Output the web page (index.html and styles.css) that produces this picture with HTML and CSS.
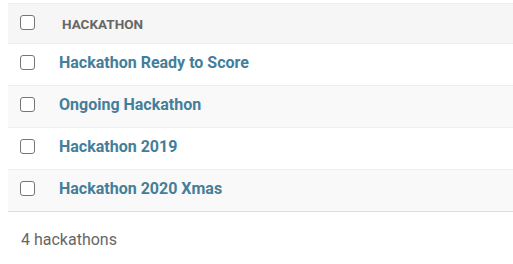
FILE: index.html
```html
<!DOCTYPE html>
<html>

<head>
    <title>Hackathons</title>
    <link rel="stylesheet" href="styles.css">
</head>

<body>
    <div id="changelist">
        <table class="result-list">
            <thead>
                <tr>
                    <th class="action-col"><input type="checkbox" class="select-box"></th>
                    <th class="name-col">Hackathon</th>
                </tr>
            </thead>
            <tbody>
                <tr>
                    <td class="action-col"><input type="checkbox" class="select-box"></td>
                    <th class="name-cell"><a href="#">Hackathon Ready to Score</a></th>
                </tr>
                <tr class="row2">
                    <td class="action-col"><input type="checkbox" class="select-box"></td>
                    <th class="name-cell"><a href="#">Ongoing Hackathon</a></th>
                </tr>
                <tr>
                    <td class="action-col"><input type="checkbox" class="select-box"></td>
                    <th class="name-cell"><a href="#">Hackathon 2019</a></th>
                </tr>
                <tr class="row2">
                    <td class="action-col"><input type="checkbox" class="select-box"></td>
                    <th class="name-cell"><a href="#">Hackathon 2020 Xmas</a></th>
                </tr>
            </tbody>
        </table>
        <p class="paginator">4 hackathons</p>
    </div>
</body>

</html>
```

FILE: styles.css
```css
    body {
        margin: 0;
        padding: 3px 0 0 8px;
        font-family: Roboto, "Liberation Sans", sans-serif;
        color: #333;
        background-color: #fff;
    }

    .result-list {
        width: 100%;
        border-collapse: collapse;
    }

    .result-list thead th {
        height: 39px;
        padding: 0;
        background-color: #f6f6f6;
        border-top: 1px solid #eee;
        border-bottom: 1px solid #eee;
        text-align: left;
        font-size: 13.5px;
        font-weight: bold;
        text-transform: uppercase;
        color: #666;
    }

    .result-list thead th.action-col {
        height: 36px;
        padding-bottom: 3px;
    }

    .result-list td,
    .result-list tbody th {
        height: 37px;
        padding: 0 0 4px 0;
        border-bottom: 1px solid #eee;
        text-align: left;
    }

    .result-list tbody tr:last-child td,
    .result-list tbody tr:last-child th {
        border-bottom: none;
    }

    .row2 {
        background-color: #f9f9f9;
    }

    .action-col {
        width: 28px;
        padding-left: 12px !important;
    }

    .name-col {
        padding-left: 14px !important;
    }

    .name-cell {
        padding-left: 11px !important;
    }

    .name-cell a {
        color: #447e9b;
        font-size: 16px;
        font-weight: bold;
        text-decoration: none;
    }

    .select-box {
        appearance: none;
        display: block;
        width: 15px;
        height: 15px;
        margin: 0;
        border: 1px solid #767676;
        border-radius: 3px;
        background-color: #fff;
    }

    .paginator {
        margin: 0;
        padding: 18px 0 0 13px;
        border-top: 1px solid #ddd;
        font-size: 16px;
        color: #666;
    }
```
